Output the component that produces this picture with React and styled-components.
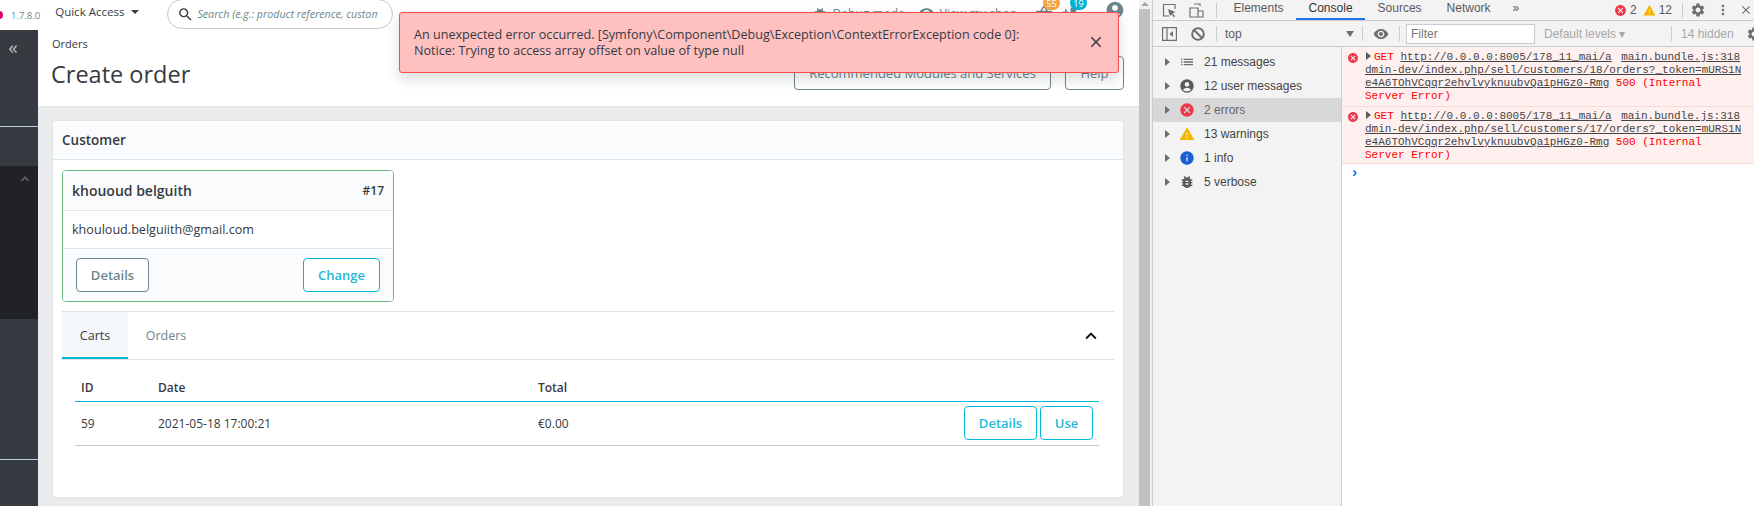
import styled, { createGlobalStyle } from "styled-components";
import {
  MdBugReport,
  MdRemoveRedEye,
  MdAccountCircle,
  MdShoppingBasket,
  MdPersonAdd,
  MdSearch,
  MdClose,
  MdExpandLess,
  MdSettings,
  MdMoreVert,
  MdInfo,
  MdCancel,
  MdWarning,
  MdList,
} from "react-icons/md";

const GlobalStyle = createGlobalStyle`
  html, body {
    margin: 0;
    padding: 0;
    height: 100%;
    overflow: hidden;
    background: #fff;
  }
  * { box-sizing: border-box; }
`;

const Layout = styled.div`
  width: 1754px;
  height: 506px;
  display: flex;
  overflow: hidden;
  font-family: "Open Sans", sans-serif;
  color: #363a41;
`;

const Page = styled.div`
  width: 1139px;
  display: flex;
  flex-direction: column;
  position: relative;
  flex-shrink: 0;
`;

const TopBar = styled.header`
  height: 30px;
  display: flex;
  align-items: flex-start;
  position: relative;
  background: #fff;
  flex-shrink: 0;
`;

const Logo = styled.span`
  width: 8px;
  height: 8px;
  margin: 11px 0 0 -5px;
  border-radius: 50%;
  background: #df0067;
`;

const Version = styled.span`
  font-size: 9.5px;
  margin: 9px 0 0 8px;
  color: #6c868e;
`;

const QuickAccess = styled.span`
  font-size: 11.5px;
  margin: 4px 0 0 15px;
  color: #363a41;
  white-space: nowrap;

  &::after {
    content: "";
    display: inline-block;
    margin-left: 7px;
    vertical-align: 2px;
    border: 4px solid transparent;
    border-top-color: #363a41;
    border-bottom: 0;
  }
`;

const Search = styled.div`
  width: 226px;
  height: 30px;
  margin: -1px 0 0 28px;
  padding-left: 9px;
  border: 1px solid #bbcdd2;
  border-radius: 15px;
  display: flex;
  align-items: center;
  gap: 3px;
  font-size: 10.7px;
  font-style: italic;
  color: #6c868e;

  svg {
    flex-shrink: 0;
    color: #363a41;
  }
`;

const SearchText = styled.span`
  width: 181px;
  overflow: hidden;
  white-space: nowrap;
`;

const TopActions = styled.div`
  margin-left: auto;
  padding-right: 14px;
  display: flex;
  align-items: flex-start;
`;

const TopLink = styled.span`
  display: flex;
  align-items: center;
  gap: 5px;
  margin-right: ${({ $gap }) => $gap}px;
  font-size: 12px;
  color: #6c868e;
  white-space: nowrap;
  padding-top: 5px;
`;

const Notify = styled.span`
  position: relative;
  width: 20px;
  margin-right: ${({ $gap }) => $gap}px;
  padding-top: 4px;
  color: #6c868e;
`;

const Badge = styled.span`
  position: absolute;
  top: -4px;
  left: 8px;
  width: 17px;
  height: 14px;
  border-radius: 8px;
  background: ${({ $color }) => $color};
  color: #fff;
  font-size: 9px;
  line-height: 15px;
  text-align: center;
`;

const Body = styled.div`
  flex: 1;
  display: flex;
  min-height: 0;
`;

const Sidebar = styled.nav`
  width: 38px;
  flex-shrink: 0;
  background: #363a41;
  display: flex;
  flex-direction: column;
`;

const SideBlock = styled.div`
  height: ${({ $h }) => $h}px;
  background: ${({ $dark }) => ($dark ? "#202226" : "#363a41")};
  border-bottom: ${({ $line }) => ($line ? "1px solid #bbcdd2" : "0")};
  color: #bebebe;
  font-size: 19px;
  line-height: 1;
  display: flex;
  align-items: flex-start;
  justify-content: center;
`;

const Collapse = styled.span`
  margin: 8px 12px 0 0;
`;

const SideChevron = styled(MdExpandLess)`
  margin: 5px 0 0 12px;
  color: #6c6f75;
`;

const Content = styled.main`
  flex: 1;
  min-width: 0;
  background: #e9ebec;
  display: flex;
  flex-direction: column;
`;

const PageHead = styled.div`
  height: 77px;
  flex-shrink: 0;
  padding: 6px 14px 0 14px;
  background: #fff;
  border-bottom: 1px solid #dfe3e5;
  display: flex;
  justify-content: space-between;
`;

const Crumb = styled.div`
  font-size: 11px;
  line-height: 15px;
`;

const Title = styled.h1`
  margin: 7px 0 0 -1px;
  font-size: 23.5px;
  font-weight: 400;
  line-height: 32px;
`;

const HeadButtons = styled.div`
  display: flex;
  gap: 14px;
  margin-top: 20px;
  margin-right: 1px;
`;

const OutlineButton = styled.button`
  height: 34px;
  width: ${({ $w }) => $w}px;
  padding: 0;
  background: #fff;
  border: 1px solid ${({ $cyan }) => ($cyan ? "#00b8d8" : "#6c868e")};
  border-radius: 4px;
  color: ${({ $cyan }) => ($cyan ? "#25b9d7" : "#6c868e")};
  font-family: "Open Sans", sans-serif;
  font-size: 13px;
  font-weight: 600;
  flex-shrink: 0;
`;

const HeadButton = styled(OutlineButton)`
  font-weight: 400;
`;

const Card = styled.section`
  width: 1070px;
  height: 376px;
  margin: 14px 0 0 15px;
  background: #fff;
  border-radius: 4px;
  box-shadow: 0 0 4px rgba(0, 0, 0, 0.06);
  display: flex;
  flex-direction: column;
`;

const CardHead = styled.div`
  height: 39px;
  flex-shrink: 0;
  padding-left: 9px;
  background: #fafbfc;
  border-bottom: 1px solid #dbe6e9;
  border-radius: 4px 4px 0 0;
  font-size: 13.5px;
  font-weight: 600;
  line-height: 38px;
`;

const CardBody = styled.div`
  padding: 10px 9px 0;
`;

const CustomerCard = styled.div`
  width: 332px;
  height: 132px;
  border: 1px solid #70b580;
  border-radius: 4px;
  display: flex;
  flex-direction: column;
  overflow: hidden;
`;

const CustomerHead = styled.div`
  height: 40px;
  flex-shrink: 0;
  padding: 0 9px;
  background: #fafbfc;
  border-bottom: 1px solid #dfe3e5;
  display: flex;
  align-items: center;
  justify-content: space-between;
`;

const CustomerName = styled.span`
  font-size: 14px;
  font-weight: 600;
`;

const CustomerId = styled.span`
  font-size: 12px;
  font-weight: 600;
`;

const CustomerMail = styled.div`
  height: 38px;
  flex-shrink: 0;
  padding: 0 9px;
  font-size: 12.6px;
  line-height: 37px;
  border-bottom: 1px solid #dbe6e9;
`;

const CustomerFoot = styled.div`
  flex: 1;
  padding: 9px 13px 0;
  background: #fafbfc;
  display: flex;
  justify-content: space-between;
  align-items: flex-start;
`;

const Tabs = styled.div`
  margin-top: 9px;
  height: 49px;
  border-top: 1px solid #dfe3e5;
  border-bottom: 1px solid #dfe3e5;
  display: flex;
  align-items: stretch;
  justify-content: space-between;
`;

const TabList = styled.div`
  display: flex;
`;

const Tab = styled.span`
  width: ${({ $w }) => $w}px;
  text-align: center;
  font-size: 12.5px;
  line-height: 47px;
  color: ${({ $active }) => ($active ? "#363a41" : "#6c868e")};
  background: ${({ $active }) => ($active ? "#f4f8fa" : "transparent")};
  border-bottom: 2px solid ${({ $active }) => ($active ? "#00b8d8" : "transparent")};
`;

const TabToggle = styled.span`
  display: flex;
  align-items: center;
  padding-right: 12px;
  color: #111;
`;

const CartTable = styled.table`
  width: 1024px;
  margin: 14px 0 0 13px;
  border-collapse: collapse;
  font-size: 12px;
  table-layout: fixed;

  th {
    height: 27px;
    padding: 0 0 0 6px;
    text-align: left;
    font-weight: 600;
    border-bottom: 1px solid #00b8d8;
  }

  td {
    height: 44px;
    padding: 0 0 0 6px;
    border-bottom: 1px solid #bbcdd2;
  }
`;

const RowActions = styled.div`
  display: flex;
  justify-content: flex-end;
  gap: 3px;
  padding-right: 6px;
`;

const Toast = styled.div`
  position: absolute;
  top: 12px;
  left: 399px;
  width: 720px;
  height: 61px;
  padding: 0 14px;
  background: #ffc0c0;
  border: 1px solid #ff4c4c;
  border-radius: 3px;
  box-shadow: 0 6px 14px rgba(0, 0, 0, 0.14);
  font-size: 12.6px;
  line-height: 16px;
  color: #363a41;
  display: flex;
  justify-content: space-between;
  align-items: center;
`;

const ToastClose = styled.span`
  display: flex;
  margin: -2px -1px 0 0;
`;

const ScrollBar = styled.div`
  width: 13px;
  flex-shrink: 0;
  background: #f1f1f1;
  position: relative;
  padding-top: 9px;

  &::before {
    content: "";
    display: block;
    height: 100%;
    width: 11px;
    background: #c1c1c1;
  }
  &::after {
    content: "";
    position: absolute;
    top: 2px;
    left: 2px;
    border: 4px solid transparent;
    border-bottom-color: #a3a3a3;
    border-top: 0;
  }
`;

const DevTools = styled.aside`
  flex: 1;
  min-width: 0;
  display: flex;
  flex-direction: column;
  border-left: 1px solid #ccc;
  font-family: "Liberation Sans", Arial, sans-serif;
  font-size: 12px;
  color: #5a5a5a;
  background: #fff;
`;

const DevBar = styled.div`
  height: ${({ $h }) => $h}px;
  flex-shrink: 0;
  background: #f3f3f3;
  border-bottom: 1px solid #ccc;
  display: flex;
  align-items: center;
  white-space: nowrap;
  overflow: hidden;
`;

const DevIcon = styled.span`
  display: flex;
  width: ${({ $w }) => $w || 20}px;
  justify-content: center;
  flex-shrink: 0;
  color: ${({ $color }) => $color || "#6e6e6e"};
`;

const DevSep = styled.span`
  width: 1px;
  height: 15px;
  margin: 0 ${({ $r }) => $r}px 0 ${({ $l }) => $l}px;
  background: #ccc;
  flex-shrink: 0;
`;

const DevTab = styled.span`
  padding: 0 ${({ $p }) => $p || 12.5}px;
  height: 20px;
  line-height: 17px;
  color: ${({ $active }) => ($active ? "#333" : "#5a5a5a")};
  border-bottom: 2px solid ${({ $active }) => ($active ? "#1a73e8" : "transparent")};
`;

const DevStatus = styled.div`
  margin-left: auto;
  width: 140px;
  flex-shrink: 0;
  display: flex;
  align-items: center;
`;

const DevCount = styled.span`
  display: flex;
  align-items: center;
  gap: 3px;
  margin-right: ${({ $m }) => $m}px;
`;

const ContextSelect = styled.span`
  width: 129px;
  flex-shrink: 0;
  display: flex;
  justify-content: space-between;
  align-items: center;

  &::after {
    content: "";
    border: 4px solid transparent;
    border-top: 6px solid #6e6e6e;
    border-bottom: 0;
  }
`;

const FilterBox = styled.span`
  width: 129px;
  height: 20px;
  margin-right: 9px;
  padding-left: 4px;
  background: #fff;
  border: 1px solid #ccc;
  line-height: 18px;
  color: #757575;
  flex-shrink: 0;
`;

const MutedLabel = styled.span`
  width: ${({ $w }) => $w}px;
  color: #a8a8a8;
  flex-shrink: 0;
`;

const DevMain = styled.div`
  flex: 1;
  display: flex;
  min-height: 0;
`;

const FilterList = styled.ul`
  width: 189px;
  flex-shrink: 0;
  margin: 0;
  padding: 3px 0 0;
  list-style: none;
  background: #f3f3f3;
  border-right: 1px solid #ccc;
`;

const FilterRow = styled.li`
  height: 24px;
  padding-left: 12px;
  display: flex;
  align-items: center;
  color: ${({ $selected }) => ($selected ? "#666" : "#444")};
  background: ${({ $selected }) => ($selected ? "#d8d8d8" : "transparent")};

  &::before {
    content: "";
    border: 4px solid transparent;
    border-left: 5px solid #6e6e6e;
    border-right: 0;
    margin-right: 9px;
  }
`;

const FilterLabel = styled.span`
  margin-left: 9px;
`;

const ConsoleArea = styled.div`
  flex: 1;
  min-width: 0;
`;

const Message = styled.div`
  height: ${({ $h }) => $h}px;
  padding: ${({ $top }) => $top}px 10px 0 23px;
  position: relative;
  background: #fff0f0;
  border-bottom: 1px solid #ffd6d6;
  font-family: "Liberation Mono", monospace;
  font-size: 11px;
  line-height: 13px;
  color: #ff0000;
`;

const MessageIcon = styled.span`
  position: absolute;
  top: ${({ $top }) => $top + 1}px;
  left: 5px;
  display: flex;
  color: #ec3a4c;
`;

const Arrow = styled.span`
  display: inline-block;
  margin: 0 3px 0 1px;
  border: 4px solid transparent;
  border-left: 5px solid #5a5a5a;
  border-right: 0;
`;

const Link = styled.span`
  color: #444;
  text-decoration: underline;
  word-break: break-all;
`;

const SourceLink = styled(Link)`
  float: right;
  margin: 0 4px 0 6px;
`;

const Prompt = styled.div`
  padding: 1px 0 0 8px;
  font-family: "Liberation Mono", monospace;
  font-size: 15px;
  font-weight: 700;
  color: #1a73e8;
`;

const InspectIcon = () => (
  <svg width="15" height="15" viewBox="0 0 15 15" fill="none" stroke="#6e6e6e" strokeWidth="1.2">
    <path d="M7 13H1.5V1.5H13V6" />
    <path d="M6 6l7.5 3-3 1.2 2.6 3-1.2 1-2.4-3L8 13z" fill="#6e6e6e" stroke="none" />
  </svg>
);

const DeviceIcon = () => (
  <svg width="15" height="15" viewBox="0 0 15 15" fill="none" stroke="#6e6e6e" strokeWidth="1.2">
    <path d="M5 1h6v2M1 5h8v9H1zM9 8h5v6H9M9 14h5" />
  </svg>
);

const DockIcon = () => (
  <svg width="15" height="14" viewBox="0 0 15 14" fill="none" stroke="#6e6e6e" strokeWidth="1.2">
    <path d="M.6.6h13.8v12.8H.6zM5 .6v12.8" />
    <path d="M11 4v6L7.5 7z" fill="#6e6e6e" stroke="none" />
  </svg>
);

const ClearIcon = () => (
  <svg width="14" height="14" viewBox="0 0 14 14" fill="none" stroke="#6e6e6e" strokeWidth="2">
    <circle cx="7" cy="7" r="5.8" />
    <path d="M3 3l8 8" />
  </svg>
);

const filters = [
  { label: "21 messages", icon: <MdList size={16} />, color: "#6e6e6e" },
  { label: "12 user messages", icon: <MdAccountCircle size={16} />, color: "#5a5a5a" },
  { label: "2 errors", icon: <MdCancel size={16} />, color: "#ec3a4c", selected: true },
  { label: "13 warnings", icon: <MdWarning size={16} />, color: "#f4b400" },
  { label: "1 info", icon: <MdInfo size={16} />, color: "#1a5fd0" },
  { label: "5 verbose", icon: <MdBugReport size={16} />, color: "#5a5a5a" },
];

const ErrorMessage = ({ id, height, top }) => (
  <Message $h={height} $top={top}>
    <MessageIcon $top={top}>
      <MdCancel size={12} />
    </MessageIcon>
    <SourceLink>main.bundle.js:318</SourceLink>
    <Arrow />
    GET <Link>http://0.0.0.0:8005/178_11_mai/admin-dev/index.php/sell/customers/{id}/orders?_token=mURS1Ne4A6TOhVCqqr2ehvlvyknuubvQa1pHGz0-Rmg</Link> 500 (Internal Server Error)
  </Message>
);

const App = () => {
  return (
    <Layout>
      <GlobalStyle />
      <Page>
        <TopBar>
          <Logo />
          <Version>1.7.8.0</Version>
          <QuickAccess>Quick Access</QuickAccess>
          <Search>
            <MdSearch size={17} />
            <SearchText>Search (e.g.: product reference, custom</SearchText>
          </Search>
          <TopActions>
            <TopLink $gap={13}>
              <MdBugReport size={16} />
              Debug mode
            </TopLink>
            <TopLink $gap={18}>
              <MdRemoveRedEye size={17} />
              View my shop
            </TopLink>
            <Notify $gap={7}>
              <MdShoppingBasket size={18} />
              <Badge $color="#f5a540">55</Badge>
            </Notify>
            <Notify $gap={23}>
              <MdPersonAdd size={18} />
              <Badge $color="#00b4d4">19</Badge>
            </Notify>
            <MdAccountCircle size={20} color="#6c868e" />
          </TopActions>
        </TopBar>
        <Body>
          <Sidebar>
            <SideBlock $h={97} $line>
              <Collapse>«</Collapse>
            </SideBlock>
            <SideBlock $h={39} />
            <SideBlock $h={153} $dark>
              <SideChevron size={16} />
            </SideBlock>
            <SideBlock $h={141} $line />
          </Sidebar>
          <Content>
            <PageHead>
              <div>
                <Crumb>Orders</Crumb>
                <Title>Create order</Title>
              </div>
              <HeadButtons>
                <HeadButton $w={257}>Recommended Modules and Services</HeadButton>
                <HeadButton $w={59}>Help</HeadButton>
              </HeadButtons>
            </PageHead>
            <Card>
              <CardHead>Customer</CardHead>
              <CardBody>
                <CustomerCard>
                  <CustomerHead>
                    <CustomerName>khououd belguith</CustomerName>
                    <CustomerId>#17</CustomerId>
                  </CustomerHead>
                  <CustomerMail>khouloud.belguiith@gmail.com</CustomerMail>
                  <CustomerFoot>
                    <OutlineButton $w={73}>Details</OutlineButton>
                    <OutlineButton $w={77} $cyan>
                      Change
                    </OutlineButton>
                  </CustomerFoot>
                </CustomerCard>
                <Tabs>
                  <TabList>
                    <Tab $w={66} $active>
                      Carts
                    </Tab>
                    <Tab $w={76}>Orders</Tab>
                  </TabList>
                  <TabToggle>
                    <MdExpandLess size={22} />
                  </TabToggle>
                </Tabs>
                <CartTable>
                  <colgroup>
                    <col style={{ width: 77 }} />
                    <col style={{ width: 380 }} />
                    <col style={{ width: 300 }} />
                    <col />
                  </colgroup>
                  <thead>
                    <tr>
                      <th>ID</th>
                      <th>Date</th>
                      <th>Total</th>
                      <th />
                    </tr>
                  </thead>
                  <tbody>
                    <tr>
                      <td>59</td>
                      <td>2021-05-18 17:00:21</td>
                      <td>€0.00</td>
                      <td>
                        <RowActions>
                          <OutlineButton $w={73} $cyan>
                            Details
                          </OutlineButton>
                          <OutlineButton $w={53} $cyan>
                            Use
                          </OutlineButton>
                        </RowActions>
                      </td>
                    </tr>
                  </tbody>
                </CartTable>
              </CardBody>
            </Card>
          </Content>
        </Body>
        <Toast>
          <div>
            An unexpected error occurred. [Symfony\Component\Debug\Exception\ContextErrorException code 0]:
            <br />
            Notice: Trying to access array offset on value of type null
          </div>
          <ToastClose>
            <MdClose size={18} />
          </ToastClose>
        </Toast>
      </Page>
      <ScrollBar />
      <DevTools>
        <DevBar $h={21}>
          <DevIcon $w={33}>
            <InspectIcon />
          </DevIcon>
          <DevIcon>
            <DeviceIcon />
          </DevIcon>
          <DevSep $l={10} $r={4} />
          <DevTab>Elements</DevTab>
          <DevTab $active>Console</DevTab>
          <DevTab>Sources</DevTab>
          <DevTab>Network</DevTab>
          <DevTab $p={9.5}>»</DevTab>
          <DevStatus>
            <DevCount $m={6}>
              <MdCancel size={13} color="#ec3a4c" />2
            </DevCount>
            <DevCount $m={0}>
              <MdWarning size={13} color="#f4b400" />12
            </DevCount>
            <DevSep $l={10} $r={5} />
            <DevIcon>
              <MdSettings size={16} />
            </DevIcon>
            <DevIcon $w={30}>
              <MdMoreVert size={16} />
            </DevIcon>
            <DevIcon $w={16}>
              <MdClose size={14} />
            </DevIcon>
          </DevStatus>
        </DevBar>
        <DevBar $h={26}>
          <DevIcon $w={33}>
            <DockIcon />
          </DevIcon>
          <DevIcon $w={23}>
            <ClearIcon />
          </DevIcon>
          <DevSep $l={7} $r={8} />
          <ContextSelect>top</ContextSelect>
          <DevSep $l={8} $r={0} />
          <DevIcon $w={36}>
            <MdRemoveRedEye size={16} />
          </DevIcon>
          <DevSep $l={0} $r={6} />
          <FilterBox>Filter</FilterBox>
          <MutedLabel $w={127}>Default levels ▾</MutedLabel>
          <DevSep $l={0} $r={9} />
          <MutedLabel $w={65}>14 hidden</MutedLabel>
          <DevIcon $w={16}>
            <MdSettings size={16} />
          </DevIcon>
        </DevBar>
        <DevMain>
          <FilterList>
            {filters.map((item) => (
              <FilterRow key={item.label} $selected={item.selected}>
                <DevIcon $w={16} $color={item.color}>
                  {item.icon}
                </DevIcon>
                <FilterLabel>{item.label}</FilterLabel>
              </FilterRow>
            ))}
          </FilterList>
          <ConsoleArea>
            <ErrorMessage id={18} height={60} top={4} />
            <ErrorMessage id={17} height={57} top={3} />
            <Prompt>›</Prompt>
          </ConsoleArea>
        </DevMain>
      </DevTools>
    </Layout>
  );
};

export default App;
